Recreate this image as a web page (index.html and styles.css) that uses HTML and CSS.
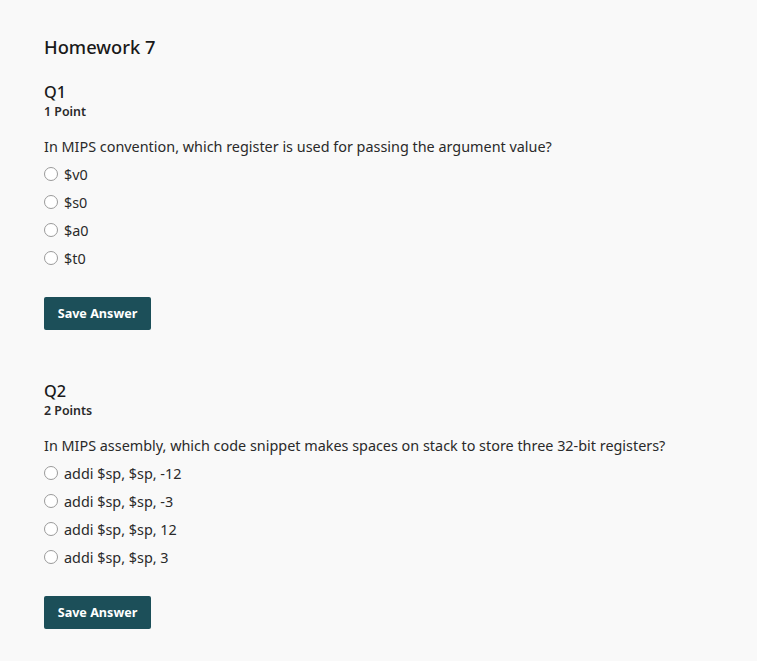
FILE: index.html
```html
<!DOCTYPE html>
<html lang="en">
<head>
    <meta charset="UTF-8">
    <title>Homework 7</title>
    <link rel="stylesheet" href="styles.css">
</head>
<body>
    <div class="page">
        <h1 class="title">Homework 7</h1>

        <div class="question">
            <h2 class="qNum">Q1</h2>
            <div class="points">1 Point</div>
            <p class="prompt">In MIPS convention, which register is used for passing the argument value?</p>
            <ul class="options">
                <li><label><input type="radio" name="q1"><span>$v0</span></label></li>
                <li><label><input type="radio" name="q1"><span>$s0</span></label></li>
                <li><label><input type="radio" name="q1"><span>$a0</span></label></li>
                <li><label><input type="radio" name="q1"><span>$t0</span></label></li>
            </ul>
            <button class="saveBtn">Save Answer</button>
        </div>

        <div class="question">
            <h2 class="qNum">Q2</h2>
            <div class="points">2 Points</div>
            <p class="prompt">In MIPS assembly, which code snippet makes spaces on stack to store three 32-bit registers?</p>
            <ul class="options">
                <li><label><input type="radio" name="q2"><span>addi $sp, $sp, -12</span></label></li>
                <li><label><input type="radio" name="q2"><span>addi $sp, $sp, -3</span></label></li>
                <li><label><input type="radio" name="q2"><span>addi $sp, $sp, 12</span></label></li>
                <li><label><input type="radio" name="q2"><span>addi $sp, $sp, 3</span></label></li>
            </ul>
            <button class="saveBtn">Save Answer</button>
        </div>
    </div>
</body>
</html>
```

FILE: styles.css
```css
*{
    margin: 0;
    padding: 0;
    box-sizing: border-box;
}
body{
    background-color: #f9f9f9;
    color: #2a2a2a;
    font-family: "Noto Sans", sans-serif;
    font-size: 14.4px;
}
.page{
    padding: 35px 44px 0;
}
.title{
    font-size: 18.3px;
    font-weight: 500;
    color: #1a1a1a;
    line-height: 24px;
    margin-bottom: 23px;
}
.question{
    margin-bottom: 51px;
}
.qNum{
    font-size: 16.3px;
    font-weight: 500;
    color: #1a1a1a;
    line-height: 20px;
}
.points{
    font-size: 12.4px;
    font-weight: 600;
    line-height: 18px;
    margin-top: 1px;
}
.prompt{
    margin-top: 16px;
    line-height: 20px;
}
.options{
    list-style-type: none;
    margin-top: 3px;
}
.options li{
    height: 28px;
    display: flex;
    align-items: center;
}
.options label{
    display: flex;
    align-items: center;
    gap: 6px;
}
.options input{
    appearance: none;
    width: 14px;
    height: 14px;
    border: 1px solid #9a9a9a;
    border-radius: 50%;
    background-color: #fff;
}
.saveBtn{
    margin-top: 25px;
    background-color: #1c4f59;
    color: #fff;
    font-family: "Noto Sans", sans-serif;
    font-size: 12.6px;
    font-weight: 700;
    border: none;
    border-radius: 2px;
    width: 107px;
    height: 33px;
}
```
